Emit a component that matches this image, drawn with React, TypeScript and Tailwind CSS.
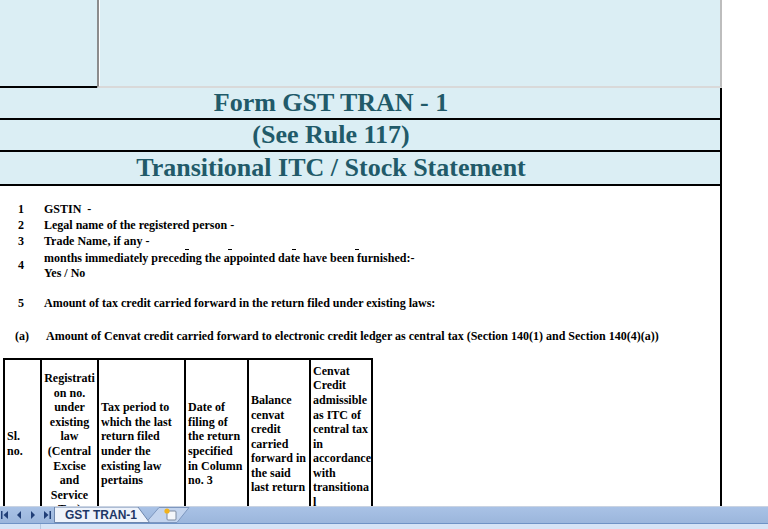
import React from 'react';

const serif = { fontFamily: '"Liberation Serif", "Times New Roman", Times, "DejaVu Serif", serif' };

const items = [
  { n: '1', text: 'GSTIN  -' },
  { n: '2', text: 'Legal name of the registered person -' },
  { n: '3', text: 'Trade Name, if any -' },
];

const headers = [
  { w: 'w-[37px]', align: 'text-left', lines: ['Sl.', 'no.'] },
  {
    w: 'w-[57px]',
    align: 'text-center',
    lines: ['Registrati', 'on no.', 'under', 'existing', 'law', '(Central', 'Excise', 'and', 'Service', 'Tax)'],
  },
  {
    w: 'w-[87px]',
    align: 'text-left',
    lines: ['Tax period to', 'which the last', 'return filed', 'under the', 'existing law', 'pertains'],
  },
  {
    w: 'w-[63px]',
    align: 'text-left',
    lines: ['Date of', 'filing of', 'the return', 'specified', 'in Column', 'no. 3'],
  },
  {
    w: 'w-[62px]',
    align: 'text-left',
    lines: ['Balance', 'cenvat', 'credit', 'carried', 'forward in', 'the said', 'last return'],
  },
  {
    w: 'w-[62px]',
    align: 'text-left',
    lines: [
      'Cenvat',
      'Credit',
      'admissible',
      'as ITC of',
      'central tax',
      'in',
      'accordance',
      'with',
      'transitiona',
      'l',
      'provisions',
    ],
  },
];

function TitleRow({ text, cls }: { text: string; cls: string }) {
  return (
    <div
      className={`${cls} flex items-center justify-center border-b-2 border-r-2 border-black bg-[#dbeef4] pr-[58px] text-[26px] font-bold leading-none text-[#215a69]`}
      style={serif}
    >
      {text}
    </div>
  );
}

function NavIcons() {
  return (
    <div className="flex h-full w-[54px] items-center gap-[6px] pl-[1px]">
      <svg width="8" height="8" viewBox="0 0 8 8">
        <rect x="0" y="0" width="1.5" height="8" fill="#213f77" />
        <polygon points="7,0 7,8 2.5,4" fill="#213f77" />
      </svg>
      <svg width="8" height="8" viewBox="0 0 8 8">
        <polygon points="6,0 6,8 2,4" fill="#213f77" />
      </svg>
      <svg width="8" height="8" viewBox="0 0 8 8">
        <polygon points="2,0 2,8 6,4" fill="#213f77" />
      </svg>
      <svg width="8" height="8" viewBox="0 0 8 8">
        <polygon points="1,0 1,8 5.5,4" fill="#213f77" />
        <rect x="6.5" y="0" width="1.5" height="8" fill="#213f77" />
      </svg>
    </div>
  );
}

export default function App() {
  return (
    <div className="flex h-[529px] w-[768px] flex-col overflow-hidden bg-white">
      <div className="h-[506px] overflow-hidden">
        <div className="w-[722px]">
          {/* embedded object area */}
          <div className="flex h-[88px]">
            <div className="w-[97px] border-b-2 border-black bg-[#dbeef4]" />
            <div className="flex-1 border-b-2 border-l-2 border-r-2 border-b-[#d9d9d9] border-l-[#8c8c8c] border-r-[#bdbdbd] bg-[#dbeef4] shadow-[inset_1px_0_0_#ffffff]" />
          </div>

          <TitleRow text="Form GST TRAN - 1" cls="h-[32px]" />
          <TitleRow text="(See Rule 117)" cls="h-[32px]" />
          <TitleRow text="Transitional ITC / Stock Statement" cls="h-[34px]" />

          <div className="h-[400px] border-r-2 border-black text-[12px] font-bold text-black" style={serif}>
            <div className="pt-[15px]">
              {items.map((it) => (
                <div key={it.n} className="flex h-[16px] items-center leading-[16px]">
                  <span className="w-[44px] pl-[18px]">{it.n}</span>
                  <span className="whitespace-pre">{it.text}</span>
                </div>
              ))}
              <div className="flex h-[31px] items-center">
                <span className="w-[44px] pl-[18px]">4</span>
                <div className="leading-[15px]">
                  <div className="flex h-[2px] items-start">
                    <span className="ml-[141px] block h-[1px] w-[4px] bg-black" />
                    <span className="ml-[39px] block h-[1px] w-[4px] bg-black" />
                    <span className="ml-[60px] block h-[1px] w-[4px] bg-black" />
                    <span className="ml-[59px] block h-[1px] w-[4px] bg-black" />
                  </div>
                  <div>months immediately preceding the appointed date have been furnished:-</div>
                  <div>Yes / No</div>
                </div>
              </div>
              <div className="mt-[15px] flex h-[16px] items-center">
                <span className="w-[44px] pl-[18px]">5</span>
                <span>Amount of tax credit carried forward in the return filed under existing laws:</span>
              </div>
              <div className="mt-[17px] flex h-[16px] items-center">
                <span className="w-[46px] pl-[15px]">(a)</span>
                <span>
                  Amount of Cenvat credit carried forward to electronic credit ledger as central tax (Section 140(1) and Section 140(4)(a))
                </span>
              </div>
            </div>

            {/* table header */}
            <div className="ml-[3px] mt-[14px] flex w-fit border-l-2 border-t-2 border-black">
              {headers.map((h, i) => (
                <div
                  key={i}
                  className={`${h.w} flex h-[168px] items-center border-r-2 border-black px-[2px] ${h.align} leading-[14.6px]`}
                >
                  <div className="w-full">
                    {h.lines.map((l, j) => (
                      <div key={j} className="whitespace-nowrap">
                        {l}
                      </div>
                    ))}
                  </div>
                </div>
              ))}
            </div>
          </div>
        </div>
      </div>

      {/* sheet tab bar */}
      <div className="flex h-[17px] items-stretch border-t border-[#c9d3e2] bg-gradient-to-b from-[#a9c2e6] to-[#9bb6dc]">
        <NavIcons />
        <div className="relative flex w-[96px] items-center">
          <svg className="absolute inset-0" width="96" height="16" viewBox="0 0 96 16">
            <polygon points="0.5,0 84,0 95.5,15.5 0.5,15.5" fill="#eef3fb" stroke="#6d86ad" strokeWidth="1" />
          </svg>
          <span
            className="relative pl-[11px] text-[12px] font-bold leading-none text-[#1e3766]"
            style={{ fontFamily: '"Liberation Sans", Arial, sans-serif' }}
          >
            GST TRAN-1
          </span>
        </div>
        <div className="-ml-[7px] w-[48px]">
          <svg width="48" height="16" viewBox="0 0 48 16">
            <polygon points="3,15.5 16,0.5 46,0.5 34,15.5" fill="#c3d4ee" stroke="#7e97bf" strokeWidth="1" />
            <rect x="24" y="4" width="9" height="9" rx="1" fill="#f4f6fa" stroke="#7d8aa0" strokeWidth="1" />
            <circle cx="24" cy="4" r="2.6" fill="#f2b21b" />
          </svg>
        </div>
        <div className="flex-1" />
      </div>
      <div className="h-[6px] border-t border-[#6f93c6] bg-[#d6e4f6]">
        <div className="ml-[40px] h-full w-px bg-[#b5c7e0]" />
      </div>
    </div>
  );
}
